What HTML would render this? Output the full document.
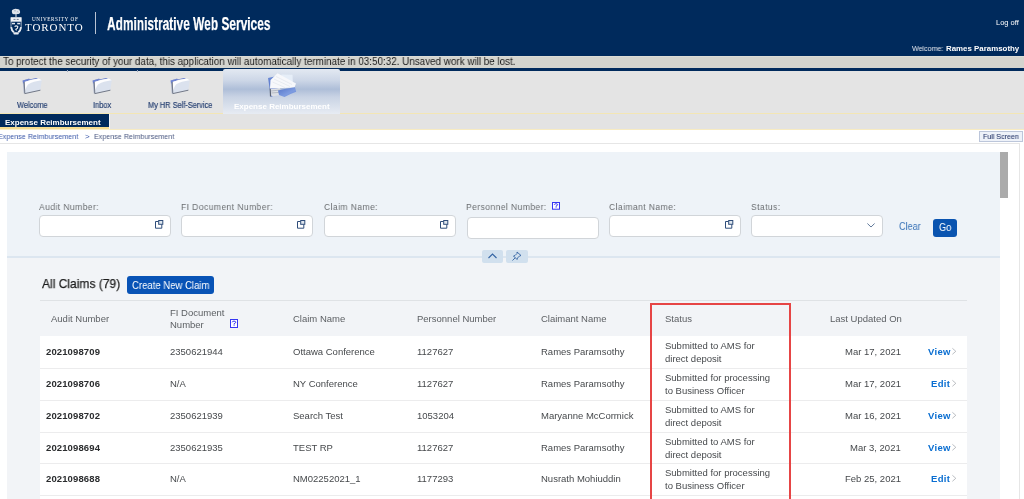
<!DOCTYPE html>
<html><head><meta charset="utf-8"><style>
*{box-sizing:border-box;margin:0;padding:0}
html,body{width:1024px;height:499px;overflow:hidden;background:#fff;font-family:"Liberation Sans",sans-serif}
.t{position:absolute;white-space:nowrap;will-change:transform}
.r{position:absolute}
svg{position:absolute;overflow:visible}
</style></head><body>
<div class="r" style="left:0px;top:0px;width:1024px;height:56px;background:#002a5c;"></div>
<svg style="left:0;top:0" width="30" height="40" viewBox="0 0 30 40">
<path d="M12 12.5 Q11.3 9.8 13.6 9.3 Q15.2 8.3 17 9 Q19.8 8.9 20 11.3 Q20.6 13.6 18.3 14 L13.8 14.2 Q12 14 12 12.5 Z" fill="#dfe4ec"/>
<path d="M14 11 Q15 10.2 16 11 M16.8 12 Q17.6 11.4 18.4 12" stroke="#8894aa" stroke-width="0.6" fill="none"/>
<rect x="15.5" y="14" width="1" height="3.2" fill="#dfe4ec"/>
<path d="M11 17.5 V27 Q11 30 13 32.5 M21.2 17.5 V27 Q21.2 30 19.2 32.5" fill="none" stroke="#c4ccd9" stroke-width="0.8"/>
<rect x="10.8" y="17.2" width="10.6" height="4.5" fill="#f0f2f6"/>
<path d="M13.5 19.4 H15.5 M16.7 19.4 H18.7" stroke="#66728c" stroke-width="0.9"/>
<rect x="12" y="22.8" width="3" height="1.5" fill="#e3e7ee"/>
<rect x="17.2" y="22.8" width="3" height="1.5" fill="#e3e7ee"/>
<path d="M14.6 26.6 Q16.2 25.2 17.8 26.6 Q18 28.4 15.9 29.2 L16.6 30.4" fill="none" stroke="#eef1f5" stroke-width="1.2"/>
<path d="M11.2 27.2 Q11.6 30.6 14 32.2 M21 27.2 Q20.6 30.6 18.2 32.2" stroke="#e8ecf2" stroke-width="1.8" fill="none"/>
<rect x="13.4" y="32.3" width="5.4" height="2.2" rx="1" fill="#e8ecf2"/>
</svg>
<div class="t" style="left:32px;top:16.60px;font-size:5.2px;line-height:5.2px;color:#fff;font-family:'Liberation Serif',serif;letter-spacing:0.58px">UNIVERSITY OF</div>
<div class="t" style="left:25px;top:22.19px;font-size:11px;line-height:11px;color:#fff;font-family:'Liberation Serif',serif;letter-spacing:0.93px">TORONTO</div>
<div class="r" style="left:95px;top:12px;width:1px;height:22px;background:#b9c3d3;"></div>
<div class="t" style="left:107px;top:14.57px;font-size:18.7px;line-height:18.7px;color:#fff;font-weight:bold;-webkit-text-stroke:0.25px #fff;transform:scaleX(0.638);transform-origin:0 0;">Administrative Web Services</div>
<div class="t" style="right:5px;top:18.75px;font-size:7.5px;line-height:7.5px;color:#fff;">Log off</div>
<div class="t" style="right:5px;top:45.11px;font-size:7.9px;line-height:7.9px;color:#fff;font-weight:bold;">Rames Paramsothy</div>
<div class="t" style="left:911.5px;top:45.45px;font-size:7.5px;line-height:7.5px;color:#e6e9ef;transform:scaleX(0.945);transform-origin:0 0;">Welcome:</div>
<div class="r" style="left:0px;top:56px;width:1024px;height:12px;background:#d4d4ce;"></div>
<div class="r" style="left:0px;top:56px;width:1024px;height:1px;background:#dcdcd6;"></div>
<div class="t" style="left:3px;top:56.23px;font-size:11.3px;line-height:11.3px;color:#1c1c1c;transform:scaleX(0.872);transform-origin:0 0;">To protect the security of your data, this application will automatically terminate in 03:50:32. Unsaved work will be lost.</div>
<div class="r" style="left:0px;top:68px;width:1024px;height:3px;background:#002a5c;"></div>
<div class="r" style="left:0px;top:71px;width:1024px;height:42px;background:#e4e4e4;"></div>
<div class="r" style="left:67px;top:70px;width:1px;height:2px;background:#9aa6bc;"></div>
<div class="r" style="left:137px;top:70px;width:1px;height:2px;background:#9aa6bc;"></div>
<svg style="left:22px;top:77px" width="21" height="18" viewBox="0 0 21 18">
<path d="M0.6 3.4 L7 1.6 L8 2.2 L14 0.9 L15 1.5 L16 13 L1.8 16.6 Z" fill="#aab3cc"/><path d="M0.6 3.6 L7 1.8 L8 2.4 L14.2 1.1 L16.7 1.6 Q8 3 2.6 4.9 L1.2 7 Z" fill="#6f84d2"/>
<path d="M2.6 4.9 Q8 3 16.7 1.6 L19.8 3.2 L18.3 13 L2.9 16.4 Z" fill="#dbe2ee"/>
<path d="M2.6 4.9 Q8 3 16.7 1.6 L19.8 3.2 Q11 4.2 6 7.5 Q4 10 3.4 13 Z" fill="#fdfdfe"/>
<path d="M2.2 5 L2.8 16.6 L18.4 13.2" stroke="#727988" stroke-width="1" fill="none"/>
</svg>
<svg style="left:92px;top:77px" width="21" height="18" viewBox="0 0 21 18">
<path d="M0.6 3.4 L7 1.6 L8 2.2 L14 0.9 L15 1.5 L16 13 L1.8 16.6 Z" fill="#aab3cc"/><path d="M0.6 3.6 L7 1.8 L8 2.4 L14.2 1.1 L16.7 1.6 Q8 3 2.6 4.9 L1.2 7 Z" fill="#6f84d2"/>
<path d="M2.6 4.9 Q8 3 16.7 1.6 L19.8 3.2 L18.3 13 L2.9 16.4 Z" fill="#dbe2ee"/>
<path d="M2.6 4.9 Q8 3 16.7 1.6 L19.8 3.2 Q11 4.2 6 7.5 Q4 10 3.4 13 Z" fill="#fdfdfe"/>
<path d="M2.2 5 L2.8 16.6 L18.4 13.2" stroke="#727988" stroke-width="1" fill="none"/>
</svg>
<svg style="left:170px;top:77px" width="21" height="18" viewBox="0 0 21 18">
<path d="M0.6 3.4 L7 1.6 L8 2.2 L14 0.9 L15 1.5 L16 13 L1.8 16.6 Z" fill="#aab3cc"/><path d="M0.6 3.6 L7 1.8 L8 2.4 L14.2 1.1 L16.7 1.6 Q8 3 2.6 4.9 L1.2 7 Z" fill="#6f84d2"/>
<path d="M2.6 4.9 Q8 3 16.7 1.6 L19.8 3.2 L18.3 13 L2.9 16.4 Z" fill="#dbe2ee"/>
<path d="M2.6 4.9 Q8 3 16.7 1.6 L19.8 3.2 Q11 4.2 6 7.5 Q4 10 3.4 13 Z" fill="#fdfdfe"/>
<path d="M2.2 5 L2.8 16.6 L18.4 13.2" stroke="#727988" stroke-width="1" fill="none"/>
</svg>
<div class="t" style="left:16.7px;top:100.97px;font-size:8.3px;line-height:8.3px;color:#1f3a6e;-webkit-text-stroke:0.15px #1f3a6e;transform:scaleX(0.89);transform-origin:0 0;">Welcome</div>
<div class="t" style="left:93.3px;top:100.97px;font-size:8.3px;line-height:8.3px;color:#1f3a6e;-webkit-text-stroke:0.15px #1f3a6e;transform:scaleX(0.89);transform-origin:0 0;">Inbox</div>
<div class="t" style="left:147.6px;top:100.97px;font-size:8.3px;line-height:8.3px;color:#1f3a6e;-webkit-text-stroke:0.15px #1f3a6e;transform:scaleX(0.89);transform-origin:0 0;">My HR Self-Service</div>
<div class="r" style="left:223px;top:69px;width:117px;height:45px;background:linear-gradient(#e3e9f2,#cdd7e7 25%,#aebed8 45%,#c9d3e4 62%,#e7ecf3);border-radius:2px 2px 0 0"></div>
<svg style="left:265px;top:71px" width="35" height="28" viewBox="0 0 35 28">
<defs><linearGradient id="gb" x1="0" y1="0" x2="0" y2="1"><stop offset="0" stop-color="#6d8bd6"/><stop offset="1" stop-color="#4c69c0"/></linearGradient>
<linearGradient id="gf" x1="0" y1="0" x2="1" y2="1"><stop offset="0" stop-color="#5474c8"/><stop offset="0.6" stop-color="#7d9be0"/><stop offset="1" stop-color="#6787d6"/></linearGradient></defs>
<path d="M3 7 L12 5 L13 23 L6 26 Z" fill="url(#gb)"/>
<path d="M16.5 3.5 L27.5 3.8 L28 15 L16 15 Z" fill="#e6eef8"/>
<path d="M5 18 L15 17 L16 24 L6.5 25.5 Z" fill="#dde0e6"/>
<path d="M6 20 L15 19 M6.3 22 L15 21.3" stroke="#9aa1ad" stroke-width="0.6"/>
<path d="M5.5 25.5 L5.2 17.5" stroke="#596070" stroke-width="1.1"/>
<path d="M5.5 9 L12.5 2.3 L31 12.5 L29.5 16.5 L5 17.5 Z" fill="#f7f8fb"/>
<path d="M11 5.5 L27 13.5 M9 8 L25 15.5 M7.5 11 L20 16.5" stroke="#dde2ea" stroke-width="0.6"/>
<path d="M13 19.5 Q20 17.5 30 16.3 L31.2 20.8 Q25 23 19.5 26 L14 24 Z" fill="url(#gf)"/>
</svg>
<div class="t" style="left:234px;top:103.03px;font-size:8px;line-height:8px;color:#fff;font-weight:bold;">Expense Reimbursement</div>
<div class="r" style="left:0px;top:113px;width:223px;height:1px;background:#f3e6b4;"></div>
<div class="r" style="left:340px;top:113px;width:684px;height:1px;background:#f3e6b4;"></div>
<div class="r" style="left:0px;top:114px;width:1024px;height:15px;background:#e3e3e3;"></div>
<div class="r" style="left:0px;top:129px;width:1024px;height:1px;background:#f7ebc2;"></div>
<div class="r" style="left:0px;top:114px;width:109px;height:13px;background:#002a5c;"></div>
<div class="r" style="left:109px;top:114px;width:1px;height:15px;background:#f4f4f4;"></div>
<div class="t" style="left:5px;top:119.03px;font-size:8px;line-height:8px;color:#fff;font-weight:bold;">Expense Reimbursement</div>
<div class="r" style="left:0px;top:127px;width:109px;height:2px;background:#f5dc90;"></div>
<div class="r" style="left:0px;top:129px;width:110px;height:1px;background:#faeec8;"></div>
<div class="t" style="left:-2.5px;top:133.01px;font-size:7.9px;line-height:7.9px;color:#3957a8;transform:scaleX(0.905);transform-origin:0 0;">Expense Reimbursement</div>
<div class="t" style="left:85px;top:132.93px;font-size:8px;line-height:8px;color:#3957a8;">&gt;</div>
<div class="t" style="left:94px;top:133.01px;font-size:7.9px;line-height:7.9px;color:#4a5880;transform:scaleX(0.905);transform-origin:0 0;">Expense Reimbursement</div>
<div class="r" style="left:979px;top:131px;width:44px;height:11px;background:#eef2f9;border:1px solid #bcc6da"></div>
<div class="t" style="left:982.8px;top:133.43px;font-size:8px;line-height:8px;color:#2a3a6c;-webkit-text-stroke:0.1px #2a3a6c;transform:scaleX(0.885);transform-origin:0 0;">Full Screen</div>
<div class="r" style="left:0px;top:143px;width:1019px;height:1px;background:#e6e6e6;"></div>
<div class="r" style="left:1019px;top:143px;width:1px;height:356px;background:#e6e6e6;"></div>
<div class="r" style="left:7px;top:152px;width:993px;height:347px;background:#f2f4f7;"></div>
<div class="r" style="left:7px;top:152px;width:993px;height:104px;background:#eef3f8;"></div>
<div class="r" style="left:7px;top:256px;width:993px;height:2px;background:#dce6f0;"></div>
<div class="r" style="left:1000px;top:152px;width:8px;height:46px;background:#ababab;"></div>
<div class="t" style="left:39.1px;top:201.92px;font-size:9.9px;line-height:9.9px;color:#6a6d70;letter-spacing:0.45px;transform:scaleX(0.87);transform-origin:0 0;">Audit Number:</div>
<div class="t" style="left:181.2px;top:201.92px;font-size:9.9px;line-height:9.9px;color:#6a6d70;letter-spacing:0.45px;transform:scaleX(0.87);transform-origin:0 0;">FI Document Number:</div>
<div class="t" style="left:324.1px;top:201.92px;font-size:9.9px;line-height:9.9px;color:#6a6d70;letter-spacing:0.45px;transform:scaleX(0.87);transform-origin:0 0;">Claim Name:</div>
<div class="t" style="left:466.3px;top:201.92px;font-size:9.9px;line-height:9.9px;color:#6a6d70;letter-spacing:0.45px;transform:scaleX(0.87);transform-origin:0 0;">Personnel Number:</div>
<div class="t" style="left:609.1px;top:201.92px;font-size:9.9px;line-height:9.9px;color:#6a6d70;letter-spacing:0.45px;transform:scaleX(0.87);transform-origin:0 0;">Claimant Name:</div>
<div class="t" style="left:751.1px;top:201.92px;font-size:9.9px;line-height:9.9px;color:#6a6d70;letter-spacing:0.45px;transform:scaleX(0.87);transform-origin:0 0;">Status:</div>
<div class="r" style="left:39px;top:215px;width:132px;height:22px;background:#fff;border:1px solid #d1d5d9;border-radius:4px"></div>
<svg style="left:154.5px;top:220px" width="9" height="9" viewBox="0 0 9 9"><path d="M0.5 1.5 H3.7 M0.5 1.5 V8.2 H6.8 V4.3" fill="none" stroke="#2f4d7a" stroke-width="1"/><rect x="3.7" y="0.5" width="4.1" height="3.8" fill="#dfe6ee" stroke="#2f4d7a" stroke-width="1"/></svg>
<div class="r" style="left:181px;top:215px;width:132px;height:22px;background:#fff;border:1px solid #d1d5d9;border-radius:4px"></div>
<svg style="left:296.5px;top:220px" width="9" height="9" viewBox="0 0 9 9"><path d="M0.5 1.5 H3.7 M0.5 1.5 V8.2 H6.8 V4.3" fill="none" stroke="#2f4d7a" stroke-width="1"/><rect x="3.7" y="0.5" width="4.1" height="3.8" fill="#dfe6ee" stroke="#2f4d7a" stroke-width="1"/></svg>
<div class="r" style="left:324px;top:215px;width:132px;height:22px;background:#fff;border:1px solid #d1d5d9;border-radius:4px"></div>
<svg style="left:439.5px;top:220px" width="9" height="9" viewBox="0 0 9 9"><path d="M0.5 1.5 H3.7 M0.5 1.5 V8.2 H6.8 V4.3" fill="none" stroke="#2f4d7a" stroke-width="1"/><rect x="3.7" y="0.5" width="4.1" height="3.8" fill="#dfe6ee" stroke="#2f4d7a" stroke-width="1"/></svg>
<div class="r" style="left:467px;top:217px;width:132px;height:22px;background:#fff;border:1px solid #d1d5d9;border-radius:4px"></div>
<div class="r" style="left:609px;top:215px;width:132px;height:22px;background:#fff;border:1px solid #d1d5d9;border-radius:4px"></div>
<svg style="left:724.5px;top:220px" width="9" height="9" viewBox="0 0 9 9"><path d="M0.5 1.5 H3.7 M0.5 1.5 V8.2 H6.8 V4.3" fill="none" stroke="#2f4d7a" stroke-width="1"/><rect x="3.7" y="0.5" width="4.1" height="3.8" fill="#dfe6ee" stroke="#2f4d7a" stroke-width="1"/></svg>
<div class="r" style="left:751px;top:215px;width:132px;height:22px;background:#fff;border:1px solid #d1d5d9;border-radius:4px"></div>
<svg style="left:551.6px;top:201.9px" width="9" height="9" viewBox="0 0 9 9"><rect x="0.5" y="0.5" width="7" height="6.7" fill="#fff" stroke="#3636f2" stroke-width="1"/><path transform="translate(0 0.2) scale(1 0.85)" d="M2.2 3 Q2.4 1.8 4 1.8 Q5.7 1.8 5.7 3 Q5.7 3.8 4.1 4.4 V5.4 M4.1 6 V6.8" stroke="#3636f2" stroke-width="1" fill="none"/></svg>
<svg style="left:867px;top:222.5px" width="8" height="5" viewBox="0 0 8 5"><path d="M0.4 0.5 L4 4 L7.6 0.5" stroke="#4f6a8e" stroke-width="0.9" fill="none"/></svg>
<div class="t" style="left:898.7px;top:222.49px;font-size:10.4px;line-height:10.4px;color:#3b74b8;transform:scaleX(0.88);transform-origin:0 0;">Clear</div>
<div class="r" style="left:933px;top:219px;width:24px;height:18px;background:#0a54b0;border-radius:3px"></div>
<div class="t" style="left:938.6px;top:222.76px;font-size:10.2px;line-height:10.2px;color:#fff;transform:scaleX(0.9);transform-origin:0 0;">Go</div>
<div class="r" style="left:482px;top:250px;width:21px;height:13px;background:#d1e0ee;border-radius:2px"></div>
<div class="r" style="left:506px;top:250px;width:22px;height:13px;background:#d1e0ee;border-radius:2px"></div>
<svg style="left:488px;top:253px" width="9" height="6" viewBox="0 0 9 6"><path d="M0.5 5 L4.5 1 L8.5 5" stroke="#3363a3" stroke-width="1.1" fill="none"/></svg>
<svg style="left:512px;top:251px" width="10" height="10" viewBox="0 0 10 10"><path d="M5 1 L9 4.5 L7.5 5 L5.5 7 L5 8.5 L1.5 5 L3 4.5 L5 2.5 Z M3.2 6.8 L0.5 9.5" stroke="#3363a3" stroke-width="0.9" fill="none"/></svg>
<div class="t" style="left:42.3px;top:277.76px;font-size:12.8px;line-height:12.8px;color:#1c1c1c;-webkit-text-stroke:0.25px #1c1c1c;transform:scaleX(0.94);transform-origin:0 0;">All Claims (79)</div>
<div class="r" style="left:127px;top:276px;width:87px;height:17.6px;background:#0853b6;border-radius:3px"></div>
<div class="t" style="left:131.6px;top:279.62px;font-size:10.6px;line-height:10.6px;color:#fff;transform:scaleX(0.9);transform-origin:0 0;">Create New Claim</div>
<div class="r" style="left:40px;top:300px;width:927px;height:1px;background:#dfe2e5;"></div>
<div class="r" style="left:40px;top:301px;width:927px;height:35px;background:#f2f4f7;"></div>
<div class="t" style="left:51px;top:313.76px;font-size:9.5px;line-height:9.5px;color:#5d6064;">Audit Number</div>
<div class="t" style="left:169.7px;top:308.26px;font-size:9.5px;line-height:9.5px;color:#5d6064;">FI Document</div>
<div class="t" style="left:169.7px;top:319.86px;font-size:9.5px;line-height:9.5px;color:#5d6064;">Number</div>
<svg style="left:229.6px;top:319.0px" width="9" height="9" viewBox="0 0 9 9"><rect x="0.5" y="0.5" width="7" height="8" fill="#fff" stroke="#3636f2" stroke-width="1"/><path transform="translate(0 0.3) scale(1 1)" d="M2.2 3 Q2.4 1.8 4 1.8 Q5.7 1.8 5.7 3 Q5.7 3.8 4.1 4.4 V5.4 M4.1 6 V6.8" stroke="#3636f2" stroke-width="1" fill="none"/></svg>
<div class="t" style="left:293.2px;top:313.76px;font-size:9.5px;line-height:9.5px;color:#5d6064;">Claim Name</div>
<div class="t" style="left:417.2px;top:313.76px;font-size:9.5px;line-height:9.5px;color:#5d6064;">Personnel Number</div>
<div class="t" style="left:541px;top:313.76px;font-size:9.5px;line-height:9.5px;color:#5d6064;">Claimant Name</div>
<div class="t" style="left:665px;top:313.76px;font-size:9.5px;line-height:9.5px;color:#5d6064;">Status</div>
<div class="t" style="right:122.5px;top:313.76px;font-size:9.5px;line-height:9.5px;color:#5d6064;">Last Updated On</div>
<div class="r" style="left:40px;top:336px;width:927px;height:32px;background:#fff;"></div>
<div class="t" style="left:45.5px;top:346.96px;font-size:9.5px;line-height:9.5px;color:#2a2c2e;font-weight:bold;letter-spacing:0.12px;">2021098709</div>
<div class="t" style="left:169.7px;top:346.96px;font-size:9.5px;line-height:9.5px;color:#46494c;">2350621944</div>
<div class="t" style="left:293.2px;top:346.96px;font-size:9.5px;line-height:9.5px;color:#46494c;">Ottawa Conference</div>
<div class="t" style="left:417.2px;top:346.96px;font-size:9.5px;line-height:9.5px;color:#46494c;">1127627</div>
<div class="t" style="left:541px;top:346.96px;font-size:9.5px;line-height:9.5px;color:#46494c;">Rames Paramsothy</div>
<div class="t" style="left:665px;top:340.96px;font-size:9.5px;line-height:9.5px;color:#46494c;">Submitted to AMS for</div>
<div class="t" style="left:665px;top:353.66px;font-size:9.5px;line-height:9.5px;color:#46494c;">direct deposit</div>
<div class="t" style="right:123px;top:346.96px;font-size:9.5px;line-height:9.5px;color:#46494c;">Mar 17, 2021</div>
<div class="t" style="right:73.39999999999998px;top:346.96px;font-size:9.5px;line-height:9.5px;color:#0a6ed1;font-weight:bold;letter-spacing:0.3px;">View</div>
<svg style="left:951.5px;top:348.4px" width="5" height="7" viewBox="0 0 5 7"><path d="M0.4 0.3 L3.8 3.3 L0.4 6.3" stroke="#a9adb2" stroke-width="0.8" fill="none"/></svg>
<div class="r" style="left:40px;top:368px;width:927px;height:32px;background:#fff;"></div>
<div class="t" style="left:45.5px;top:378.96px;font-size:9.5px;line-height:9.5px;color:#2a2c2e;font-weight:bold;letter-spacing:0.12px;">2021098706</div>
<div class="t" style="left:169.7px;top:378.96px;font-size:9.5px;line-height:9.5px;color:#46494c;">N/A</div>
<div class="t" style="left:293.2px;top:378.96px;font-size:9.5px;line-height:9.5px;color:#46494c;">NY Conference</div>
<div class="t" style="left:417.2px;top:378.96px;font-size:9.5px;line-height:9.5px;color:#46494c;">1127627</div>
<div class="t" style="left:541px;top:378.96px;font-size:9.5px;line-height:9.5px;color:#46494c;">Rames Paramsothy</div>
<div class="t" style="left:665px;top:372.96px;font-size:9.5px;line-height:9.5px;color:#46494c;">Submitted for processing</div>
<div class="t" style="left:665px;top:385.66px;font-size:9.5px;line-height:9.5px;color:#46494c;">to Business Officer</div>
<div class="t" style="right:123px;top:378.96px;font-size:9.5px;line-height:9.5px;color:#46494c;">Mar 17, 2021</div>
<div class="t" style="right:73.39999999999998px;top:378.96px;font-size:9.5px;line-height:9.5px;color:#0a6ed1;font-weight:bold;letter-spacing:0.3px;">Edit</div>
<svg style="left:951.5px;top:380.4px" width="5" height="7" viewBox="0 0 5 7"><path d="M0.4 0.3 L3.8 3.3 L0.4 6.3" stroke="#a9adb2" stroke-width="0.8" fill="none"/></svg>
<div class="r" style="left:40px;top:400px;width:927px;height:32px;background:#fff;"></div>
<div class="t" style="left:45.5px;top:410.96px;font-size:9.5px;line-height:9.5px;color:#2a2c2e;font-weight:bold;letter-spacing:0.12px;">2021098702</div>
<div class="t" style="left:169.7px;top:410.96px;font-size:9.5px;line-height:9.5px;color:#46494c;">2350621939</div>
<div class="t" style="left:293.2px;top:410.96px;font-size:9.5px;line-height:9.5px;color:#46494c;">Search Test</div>
<div class="t" style="left:417.2px;top:410.96px;font-size:9.5px;line-height:9.5px;color:#46494c;">1053204</div>
<div class="t" style="left:541px;top:410.96px;font-size:9.5px;line-height:9.5px;color:#46494c;">Maryanne McCormick</div>
<div class="t" style="left:665px;top:404.96px;font-size:9.5px;line-height:9.5px;color:#46494c;">Submitted to AMS for</div>
<div class="t" style="left:665px;top:417.66px;font-size:9.5px;line-height:9.5px;color:#46494c;">direct deposit</div>
<div class="t" style="right:123px;top:410.96px;font-size:9.5px;line-height:9.5px;color:#46494c;">Mar 16, 2021</div>
<div class="t" style="right:73.39999999999998px;top:410.96px;font-size:9.5px;line-height:9.5px;color:#0a6ed1;font-weight:bold;letter-spacing:0.3px;">View</div>
<svg style="left:951.5px;top:412.4px" width="5" height="7" viewBox="0 0 5 7"><path d="M0.4 0.3 L3.8 3.3 L0.4 6.3" stroke="#a9adb2" stroke-width="0.8" fill="none"/></svg>
<div class="r" style="left:40px;top:432px;width:927px;height:31px;background:#fff;"></div>
<div class="t" style="left:45.5px;top:442.96px;font-size:9.5px;line-height:9.5px;color:#2a2c2e;font-weight:bold;letter-spacing:0.12px;">2021098694</div>
<div class="t" style="left:169.7px;top:442.96px;font-size:9.5px;line-height:9.5px;color:#46494c;">2350621935</div>
<div class="t" style="left:293.2px;top:442.96px;font-size:9.5px;line-height:9.5px;color:#46494c;">TEST RP</div>
<div class="t" style="left:417.2px;top:442.96px;font-size:9.5px;line-height:9.5px;color:#46494c;">1127627</div>
<div class="t" style="left:541px;top:442.96px;font-size:9.5px;line-height:9.5px;color:#46494c;">Rames Paramsothy</div>
<div class="t" style="left:665px;top:436.96px;font-size:9.5px;line-height:9.5px;color:#46494c;">Submitted to AMS for</div>
<div class="t" style="left:665px;top:449.66px;font-size:9.5px;line-height:9.5px;color:#46494c;">direct deposit</div>
<div class="t" style="right:123px;top:442.96px;font-size:9.5px;line-height:9.5px;color:#46494c;">Mar 3, 2021</div>
<div class="t" style="right:73.39999999999998px;top:442.96px;font-size:9.5px;line-height:9.5px;color:#0a6ed1;font-weight:bold;letter-spacing:0.3px;">View</div>
<svg style="left:951.5px;top:444.4px" width="5" height="7" viewBox="0 0 5 7"><path d="M0.4 0.3 L3.8 3.3 L0.4 6.3" stroke="#a9adb2" stroke-width="0.8" fill="none"/></svg>
<div class="r" style="left:40px;top:463px;width:927px;height:32px;background:#fff;"></div>
<div class="t" style="left:45.5px;top:473.96px;font-size:9.5px;line-height:9.5px;color:#2a2c2e;font-weight:bold;letter-spacing:0.12px;">2021098688</div>
<div class="t" style="left:169.7px;top:473.96px;font-size:9.5px;line-height:9.5px;color:#46494c;">N/A</div>
<div class="t" style="left:293.2px;top:473.96px;font-size:9.5px;line-height:9.5px;color:#46494c;">NM02252021_1</div>
<div class="t" style="left:417.2px;top:473.96px;font-size:9.5px;line-height:9.5px;color:#46494c;">1177293</div>
<div class="t" style="left:541px;top:473.96px;font-size:9.5px;line-height:9.5px;color:#46494c;">Nusrath Mohiuddin</div>
<div class="t" style="left:665px;top:467.96px;font-size:9.5px;line-height:9.5px;color:#46494c;">Submitted for processing</div>
<div class="t" style="left:665px;top:480.66px;font-size:9.5px;line-height:9.5px;color:#46494c;">to Business Officer</div>
<div class="t" style="right:123px;top:473.96px;font-size:9.5px;line-height:9.5px;color:#46494c;">Feb 25, 2021</div>
<div class="t" style="right:73.39999999999998px;top:473.96px;font-size:9.5px;line-height:9.5px;color:#0a6ed1;font-weight:bold;letter-spacing:0.3px;">Edit</div>
<svg style="left:951.5px;top:475.4px" width="5" height="7" viewBox="0 0 5 7"><path d="M0.4 0.3 L3.8 3.3 L0.4 6.3" stroke="#a9adb2" stroke-width="0.8" fill="none"/></svg>
<div class="r" style="left:40px;top:496px;width:927px;height:10px;background:#fff;"></div>
<div class="r" style="left:40px;top:368px;width:927px;height:1px;background:#ececed;"></div>
<div class="r" style="left:40px;top:400px;width:927px;height:1px;background:#ececed;"></div>
<div class="r" style="left:40px;top:432px;width:927px;height:1px;background:#ececed;"></div>
<div class="r" style="left:40px;top:463px;width:927px;height:1px;background:#ececed;"></div>
<div class="r" style="left:40px;top:495px;width:927px;height:1px;background:#ececed;"></div>
<div class="r" style="left:650px;top:302.5px;width:141px;height:250px;background:transparent;border:2px solid #e64545"></div>
</body></html>
